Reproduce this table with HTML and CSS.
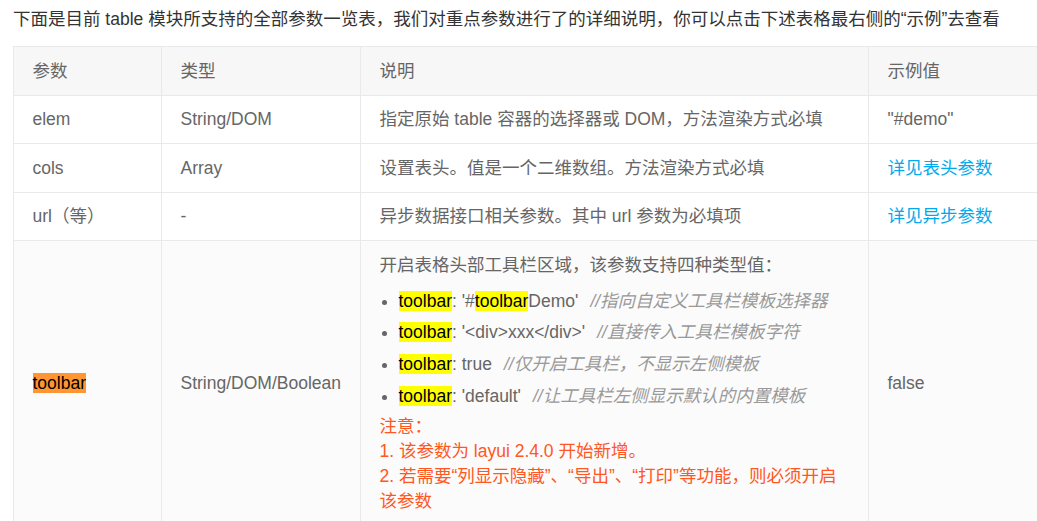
FILE: index.html
```html
<!DOCTYPE html>
<html lang="zh-CN">
<head>
<meta charset="utf-8">
<title>table 参数</title>
<link rel="stylesheet" href="styles.css">
</head>
<body>
<div class="page">
  <p class="intro">下面是目前 table 模块所支持的全部参数一览表，我们对重点参数进行了的详细说明，你可以点击下述表格最右侧的“示例”去查看</p>
  <table class="params">
    <colgroup>
      <col class="c1"><col class="c2"><col class="c3"><col class="c4">
    </colgroup>
    <thead>
      <tr><th>参数</th><th>类型</th><th>说明</th><th>示例值</th></tr>
    </thead>
    <tbody>
      <tr><td>elem</td><td>String/DOM</td><td>指定原始 table 容器的选择器或 DOM，方法渲染方式必填</td><td>"#demo"</td></tr>
      <tr><td>cols</td><td>Array</td><td>设置表头。值是一个二维数组。方法渲染方式必填</td><td><a class="link" href="#cols">详见表头参数</a></td></tr>
      <tr><td>url（等）</td><td>-</td><td>异步数据接口相关参数。其中 url 参数为必填项</td><td><a class="link" href="#async">详见异步参数</a></td></tr>
      <tr class="alt">
        <td><span class="hit-active">toolbar</span></td>
        <td>String/DOM/Boolean</td>
        <td>
          <p class="lead">开启表格头部工具栏区域，该参数支持四种类型值：</p>
          <ul class="opts">
            <li><mark>toolbar</mark>: '#<mark>toolbar</mark>Demo'<em class="cmt">//指向自定义工具栏模板选择器</em></li>
            <li><mark>toolbar</mark>: '&lt;div&gt;xxx&lt;/div&gt;'<em class="cmt">//直接传入工具栏模板字符</em></li>
            <li><mark>toolbar</mark>: true<em class="cmt">//仅开启工具栏，不显示左侧模板</em></li>
            <li><mark>toolbar</mark>: 'default'<em class="cmt">//让工具栏左侧显示默认的内置模板</em></li>
          </ul>
          <div class="note">注意：<br>1. 该参数为 layui 2.4.0 开始新增。<br>2. 若需要“列显示隐藏”、“导出”、“打印”等功能，则必须开启该参数</div>
        </td>
        <td>false</td>
      </tr>
    </tbody>
  </table>
</div>
</body>
</html>
```
FILE: styles.css
```css
html, body {
  margin: 0;
  padding: 0;
  overflow: hidden;
  background: #fff;
}
body {
  font-family: "Liberation Sans", "Noto Sans CJK SC", sans-serif;
  font-size: 17.5px;
  color: #333;
}
.page {
  padding: 7px 0 0 13px;
}
.intro {
  margin: 0 0 14px;
  line-height: 25px;
  white-space: nowrap;
  color: #333;
}
.params {
  border-collapse: collapse;
  table-layout: fixed;
  width: 1060px;
  color: #666;
}
.c1 { width: 148px; }
.c2 { width: 199px; }
.c3 { width: 508px; }
.c4 { width: 205px; }
.params th,
.params td {
  border: 1px solid #e9e9e9;
  padding: 11.5px 18.5px 11px;
  line-height: 25px;
  text-align: left;
  font-weight: normal;
  vertical-align: middle;
}
.params thead tr {
  background: #f7f7f7;
}
.params tr.alt {
  background: #fbfbfb;
}
.link {
  color: #01aaed;
  text-decoration: none;
}
.hit-active {
  background: #ff9632;
  color: #000;
}
mark {
  background: #ffff00;
  color: #000;
}
.lead {
  margin: 0;
}
.opts {
  margin: 8px 0 2px;
  padding-left: 19px;
  list-style: disc;
}
.opts li {
  padding: 3.3px 0;
  line-height: 25px;
}
.cmt {
  margin-left: 12px;
  color: #999;
  font-style: italic;
}
.note {
  color: #ff5722;
  line-height: 25px;
}
```
